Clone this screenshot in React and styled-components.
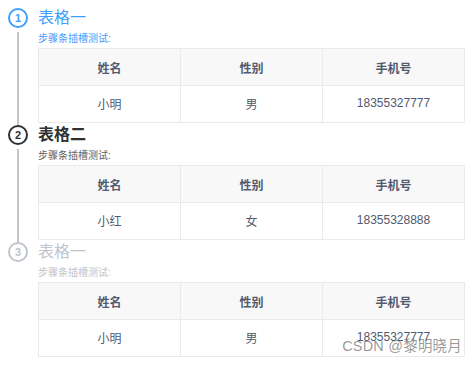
import styled, { createGlobalStyle } from 'styled-components'

const GlobalStyle = createGlobalStyle`
  html, body {
    margin: 0;
    padding: 0;
    background: #ffffff;
    font-family: "Liberation Sans", "Noto Sans CJK SC", sans-serif;
  }
`

const COLORS = {
  process: { main: '#409eff', title: '#409eff', desc: '#409eff', weight: 400 },
  finish: { main: '#303133', title: '#303133', desc: '#606266', weight: 700 },
  wait: { main: '#c0c4cc', title: '#c0c4cc', desc: '#c0c4cc', weight: 400 },
}

const steps = [
  { title: '表格一', status: 'process', rows: [['小明', '男', '18355327777']] },
  { title: '表格二', status: 'finish', rows: [['小红', '女', '18355328888']] },
  { title: '表格一', status: 'wait', rows: [['小明', '男', '18355327777']] },
]

const App = () => {
  return (
    <>
      <GlobalStyle />
      <Page>
        <Steps>
          {steps.map((step, i) => {
            const c = COLORS[step.status]
            return (
              <Step key={i}>
                <Rail>
                  <IconBox>
                    <Circle $color={c.main}>{i + 1}</Circle>
                  </IconBox>
                  {i < steps.length - 1 && <Line />}
                </Rail>
                <Content>
                  <Title $color={c.title} $weight={c.weight}>{step.title}</Title>
                  <Desc $color={c.desc}>步骤条插槽测试:</Desc>
                  <Table>
                    <thead>
                      <tr>
                        <Th>姓名</Th>
                        <Th>性别</Th>
                        <Th>手机号</Th>
                      </tr>
                    </thead>
                    <tbody>
                      {step.rows.map((r, j) => (
                        <tr key={j}>
                          {r.map((cell, k) => <Td key={k}>{cell}</Td>)}
                        </tr>
                      ))}
                    </tbody>
                  </Table>
                </Content>
              </Step>
            )
          })}
        </Steps>
        <Watermark>CSDN @黎明晓月</Watermark>
      </Page>
    </>
  )
}

const Page = styled.div`
  position: relative;
  width: 474px;
  height: 366px;
  overflow: hidden;
  padding: 6px 9px 0 8px;
  box-sizing: border-box;
`

const Steps = styled.div`
  display: flex;
  flex-direction: column;
`

const Step = styled.div`
  display: flex;
  flex-direction: row;
  gap: 10px;
`

const Rail = styled.div`
  width: 20px;
  display: flex;
  flex-direction: column;
  align-items: center;
`

const IconBox = styled.div`
  height: 24px;
  display: flex;
  align-items: center;
  justify-content: center;
`

const Circle = styled.div`
  width: 20px;
  height: 20px;
  box-sizing: border-box;
  border: 2px solid ${p => p.$color};
  border-radius: 50%;
  color: ${p => p.$color};
  font-size: 11px;
  font-weight: 700;
  display: flex;
  align-items: center;
  justify-content: center;
`

const Line = styled.div`
  width: 2px;
  flex: 1;
  background: #c0c4cc;
  margin: 2px 0 -2px;
`

const Content = styled.div`
  flex: 1;
  display: flex;
  flex-direction: column;
`

const Title = styled.div`
  font-size: 16px;
  line-height: 24px;
  color: ${p => p.$color};
  font-weight: ${p => p.$weight};
`

const Desc = styled.div`
  font-size: 10px;
  line-height: 18px;
  color: ${p => p.$color};
`

const Table = styled.table`
  width: 427px;
  border-collapse: collapse;
  table-layout: fixed;
  font-size: 12px;
`

const Th = styled.th`
  height: 36px;
  padding: 0;
  background: #f8f8f9;
  border: 1px solid #e8eaec;
  color: #515a6e;
  font-weight: 700;
  text-align: center;
`

const Td = styled.td`
  height: 34px;
  padding: 0 0 2px;
  border: 1px solid #e8eaec;
  color: #515a6e;
  text-align: center;
`

const Watermark = styled.div`
  position: absolute;
  right: 12px;
  bottom: 11px;
  font-size: 14.5px;
  color: rgba(120, 120, 120, 0.75);
  letter-spacing: 0.2px;
`

export default App
